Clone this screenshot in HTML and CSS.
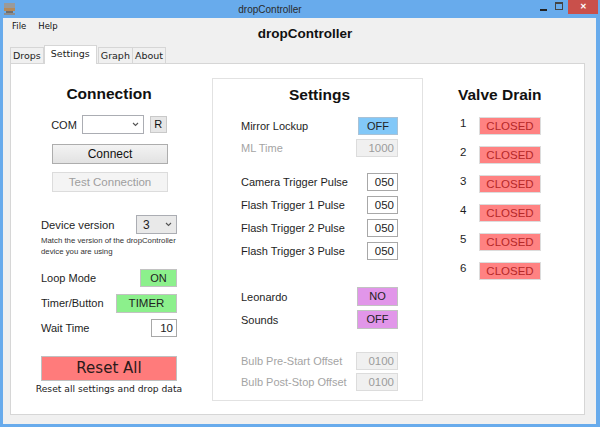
FILE: index.html
```html
<!DOCTYPE html>
<html lang="en">
<head>
<meta charset="UTF-8">
<meta name="viewport" content="width=device-width, initial-scale=1.0">
<title>dropController</title>
<link rel="stylesheet" href="styles.css">
</head>
<body>

<div class="window">
    <div class="titlebar">
        <svg class="app-icon" width="11" height="12" viewBox="0 0 11 12">
            <rect x="0" y="0" width="11" height="5" fill="#9a9a9a"/>
            <rect x="0" y="5" width="11" height="3" fill="#b58a5a"/>
            <rect x="2" y="8" width="7" height="2" fill="#6d6d6d"/>
            <rect x="0" y="10" width="11" height="2" fill="#8c8c8c"/>
        </svg>
        <span class="win-title">dropController</span>
        <div class="caption">
            <span class="cap-min"></span>
            <span class="cap-max"></span>
            <span class="cap-close">&#x2715;</span>
        </div>
    </div>

    <div class="client">
        <div class="header">
            <ul class="menu">
                <li>File</li>
                <li>Help</li>
            </ul>
            <h1 class="app-title">dropController</h1>
        </div>

        <div class="tabs">
            <span class="tab">Drops</span>
            <span class="tab active">Settings</span>
            <span class="tab">Graph</span>
            <span class="tab">About</span>
        </div>

        <div class="panel">
            <!-- connection column -->
            <section class="col-conn">
                <h2>Connection</h2>
                <div class="com-row">
                    <span class="lbl">COM</span>
                    <span class="select com-select">
                        <svg width="7" height="5" viewBox="0 0 7 5"><path d="M1 1 L3.5 3.5 L6 1" fill="none" stroke="#555" stroke-width="1.1"/></svg>
                    </span>
                    <span class="btn btn-r">R</span>
                </div>
                <span class="btn btn-wide btn-connect">Connect</span>
                <span class="btn btn-wide btn-disabled btn-test">Test Connection</span>

                <div class="row row-device">
                    <span class="lbl">Device version</span>
                    <span class="select dev-select">3
                        <svg width="7" height="5" viewBox="0 0 7 5"><path d="M1 1 L3.5 3.5 L6 1" fill="none" stroke="#555" stroke-width="1.1"/></svg>
                    </span>
                </div>
                <p class="note">Match the version of the dropController<br>device you are using</p>

                <div class="row row-loop">
                    <span class="lbl">Loop Mode</span>
                    <span class="tog tog-green w-on">ON</span>
                </div>
                <div class="row row-timer">
                    <span class="lbl">Timer/Button</span>
                    <span class="tog tog-green w-timer">TIMER</span>
                </div>
                <div class="row row-wait">
                    <span class="lbl">Wait Time</span>
                    <span class="num w-wait">10</span>
                </div>

                <span class="btn-reset">Reset All</span>
                <p class="reset-desc">Reset all settings and drop data</p>
            </section>

            <!-- settings group -->
            <section class="col-settings">
                <h2>Settings</h2>
                <div class="row s-mirror">
                    <span class="lbl">Mirror Lockup</span>
                    <span class="tog tog-blue w-40">OFF</span>
                </div>
                <div class="row s-ml">
                    <span class="lbl lbl-off">ML Time</span>
                    <span class="num num-off w-42">1000</span>
                </div>
                <div class="row s-camera">
                    <span class="lbl">Camera Trigger Pulse</span>
                    <span class="num w-31">050</span>
                </div>
                <div class="row s-flash">
                    <span class="lbl">Flash Trigger 1 Pulse</span>
                    <span class="num w-31">050</span>
                </div>
                <div class="row s-flash">
                    <span class="lbl">Flash Trigger 2 Pulse</span>
                    <span class="num w-31">050</span>
                </div>
                <div class="row s-flash">
                    <span class="lbl">Flash Trigger 3 Pulse</span>
                    <span class="num w-31">050</span>
                </div>
                <div class="row s-leo">
                    <span class="lbl">Leonardo</span>
                    <span class="tog tog-violet w-41">NO</span>
                </div>
                <div class="row s-sounds">
                    <span class="lbl">Sounds</span>
                    <span class="tog tog-violet w-41">OFF</span>
                </div>
                <div class="row s-bulb-pre">
                    <span class="lbl lbl-off">Bulb Pre-Start Offset</span>
                    <span class="num num-off w-42">0100</span>
                </div>
                <div class="row s-bulb-post">
                    <span class="lbl lbl-off">Bulb Post-Stop Offset</span>
                    <span class="num num-off w-42">0100</span>
                </div>
            </section>

            <!-- valve drain -->
            <section class="col-valves">
                <h2>Valve Drain</h2>
                <div class="valve"><span class="valve-no">1</span><span class="closed">CLOSED</span></div>
                <div class="valve"><span class="valve-no">2</span><span class="closed">CLOSED</span></div>
                <div class="valve"><span class="valve-no">3</span><span class="closed">CLOSED</span></div>
                <div class="valve"><span class="valve-no">4</span><span class="closed">CLOSED</span></div>
                <div class="valve"><span class="valve-no">5</span><span class="closed">CLOSED</span></div>
                <div class="valve"><span class="valve-no">6</span><span class="closed">CLOSED</span></div>
            </section>
        </div>
    </div>
</div>

</body>
</html>
```

FILE: styles.css
```css
body {
    margin: 0;
    padding: 0;
    font-family: "Liberation Sans", Arial, sans-serif;
    font-size: 11px;
    color: #1e1e1e;
    overflow: hidden;
}
.window {
    width: 600px;
    height: 427px;
    background-color: #68abec;
    display: flex;
    flex-direction: column;
}

/* title bar */
.titlebar {
    height: 18px;
    display: flex;
    align-items: center;
    position: relative;
}
.app-icon {
    margin-left: 4px;
}
.win-title {
    flex: 1;
    text-align: center;
    font-size: 10px;
    color: #2a2a2a;
    margin-left: -15px;
}
.caption {
    align-self: flex-start;
    display: flex;
    align-items: flex-start;
    margin-right: 2px;
}
.cap-min {
    width: 7px;
    height: 2px;
    background-color: #222;
    margin-top: 9px;
    margin-right: 8px;
}
.cap-max {
    width: 6px;
    height: 5px;
    border: 1px solid #444;
    border-top-width: 2px;
    margin-top: 2px;
    margin-right: 5px;
}
.cap-close {
    width: 30px;
    height: 14px;
    background-color: #c9504b;
    color: #fff;
    font-size: 8px;
    font-weight: bold;
    text-align: center;
    line-height: 14px;
}

/* client area */
.client {
    flex: 1;
    margin: 0 4px 3px 3px;
    background-color: #f0f0f0;
    display: flex;
    flex-direction: column;
}
.header {
    height: 27px;
    display: grid;
}
.menu, .app-title {
    grid-area: 1 / 1;
}
.menu {
    list-style: none;
    margin: 0;
    padding: 2px 0 0 9px;
    display: flex;
    gap: 12px;
    font-family: "DejaVu Sans", sans-serif;
    font-size: 8.5px;
    line-height: 12px;
    color: #111;
}
.app-title {
    margin: 8px 0 0 11px;
    text-align: center;
    font-size: 13.5px;
    line-height: 16px;
    color: #111;
}

/* tabs */
.tabs {
    height: 18px;
    display: flex;
    align-items: flex-end;
    padding-left: 7px;
    font-family: "DejaVu Sans", sans-serif;
    font-size: 9.5px;
    color: #222;
}
.tab {
    height: 15px;
    line-height: 15px;
    padding: 0 2px;
    border: 1px solid #d6d6d6;
    border-bottom: none;
    background-color: #f0f0f0;
    margin-right: -1px;
}
.tab.active {
    height: 18px;
    line-height: 15px;
    padding: 0 6px;
    margin: 0 1px -1px 1px;
    background-color: #fff;
    position: relative;
    z-index: 1;
}

.panel {
    flex: 1;
    margin: 0 11px 9px 7px;
    background-color: #fff;
    border: 1px solid #d6d6d6;
    display: grid;
    grid-template-columns: 201px 211px 1fr;
    align-items: start;
}

h2 {
    margin: 0;
    font-size: 15.5px;
    line-height: 18px;
    color: #111;
    text-align: center;
}
.lbl {
    white-space: nowrap;
}
.lbl-off {
    color: #a4a4a4;
}
.row {
    display: flex;
    justify-content: space-between;
    align-items: center;
    height: 18px;
}

/* connection column */
.col-conn {
    padding-left: 30px;
    width: 136px;
    display: flex;
    flex-direction: column;
}
.col-conn h2 {
    margin-top: 21px;
}
.com-row {
    margin-top: 12px;
    height: 19px;
    display: flex;
    align-items: center;
    justify-content: center;
    gap: 5px;
}
.select {
    box-sizing: border-box;
    height: 19px;
    border: 1px solid #abadb3;
    background-color: #fff;
    display: flex;
    align-items: center;
    justify-content: space-between;
    padding: 0 4px 0 6px;
}
.com-select {
    width: 62px;
    justify-content: flex-end;
}
.dev-select {
    width: 41px;
    height: 19px;
    background-color: #e9e9e9;
    font-size: 12px;
}
.btn {
    box-sizing: border-box;
    border: 1px solid #adadad;
    background: linear-gradient(#f3f3f3, #e2e2e2);
    text-align: center;
    color: #111;
}
.btn-r {
    width: 17px;
    height: 17px;
    line-height: 15px;
    font-size: 11px;
    margin-left: 1px;
    background: #e6e6e6;
    border-color: #c9c9c9;
}
.btn-wide {
    width: 116px;
    height: 20px;
    line-height: 18px;
    margin-left: 11px;
    font-size: 11.5px;
}
.btn-connect {
    margin-top: 10px;
    font-size: 12px;
}
.btn-test {
    margin-top: 8px;
}
.btn-disabled {
    background: #f4f4f4;
    border-color: #dcdcdc;
    color: #9e9e9e;
}
.row-device {
    margin-top: 23px;
    height: 19px;
}
.row-device .lbl {
    font-size: 11.2px;
}
.note {
    margin: 1px -10px 0 0;
    white-space: nowrap;
    font-size: 7.8px;
    line-height: 11px;
    color: #333;
}
.row-loop {
    margin-top: 12px;
}
.row-timer,
.row-wait {
    margin-top: 7px;
}
.btn-reset {
    margin-top: 19px;
    box-sizing: border-box;
    height: 25px;
    line-height: 22px;
    border: 1px solid #c0c0c0;
    background-color: #ff7b7b;
    text-align: center;
    font-family: "DejaVu Sans", sans-serif;
    font-size: 15px;
    color: #2a1a1a;
}
.reset-desc {
    margin: 2px -20px 0;
    text-align: center;
    white-space: nowrap;
    font-family: "DejaVu Sans", sans-serif;
    font-size: 9.2px;
    line-height: 12px;
    color: #222;
}

/* toggles and boxes */
.tog, .num {
    box-sizing: border-box;
    height: 18px;
    line-height: 16px;
    border: 1px solid #c2c2c2;
    text-align: center;
    color: #222;
}
.tog-green { background-color: #8cf08c; }
.tog-blue { background-color: #82c8f8; border-color: #a9c2d6; }
.tog-violet { background-color: #e196e9; }
.num {
    background-color: #fff;
    border-color: #a8a8a8;
    text-align: right;
    padding-right: 3px;
    font-size: 11.5px;
}
.num-off {
    background-color: #f0f0f0;
    border-color: #dcdcdc;
    color: #9c9c9c;
}
.w-on { width: 37px; }
.w-timer { width: 61px; height: 19px; font-size: 11.5px; }
.w-wait { width: 26px; }
.w-40 { width: 40px; }
.w-41 { width: 41px; }
.w-42 { width: 42px; }
.w-31 { width: 31px; }

/* settings group */
.col-settings {
    margin-top: 14px;
    height: 323px;
    box-sizing: border-box;
    border: 1px solid #e2e2e2;
    padding: 0 24px 0 28px;
    display: flex;
    flex-direction: column;
}
.col-settings h2 {
    margin-top: 7px;
}
.s-mirror { margin-top: 13px; }
.s-ml { margin-top: 4px; }
.s-camera { margin-top: 16px; }
.s-flash { margin-top: 5px; }
.s-leo { margin-top: 27px; height: 19px; }
.s-sounds { margin-top: 4px; height: 19px; }
.s-leo .tog, .s-sounds .tog { height: 19px; }
.s-bulb-pre { margin-top: 22px; height: 19px; }
.s-bulb-post { margin-top: 2px; height: 19px; }

/* valve drain */
.col-valves {
    padding-left: 35px;
    display: flex;
    flex-direction: column;
}
.col-valves h2 {
    margin-top: 22px;
    text-align: left;
}
.valve {
    display: flex;
    align-items: flex-start;
    margin-top: 11px;
}
.valve:first-of-type {
    margin-top: 13px;
}
.valve-no {
    width: 21px;
    padding-left: 2px;
    box-sizing: border-box;
    line-height: 12px;
    font-size: 11.5px;
}
.closed {
    box-sizing: border-box;
    width: 62px;
    height: 18px;
    line-height: 16px;
    border: 1px solid #dcdcdc;
    background-color: #ff8282;
    color: #b62828;
    text-align: center;
    font-size: 11.5px;
}
```
